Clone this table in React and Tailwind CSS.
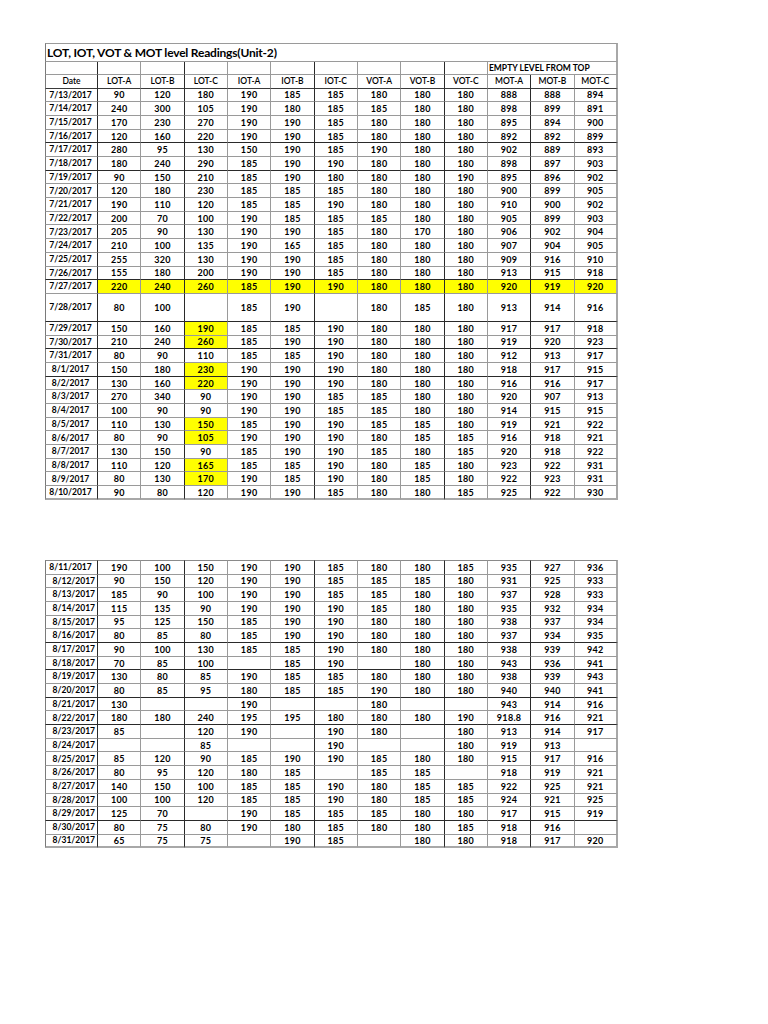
import React from "react";

const HEAD = ["Date","LOT-A","LOT-B","LOT-C","IOT-A","IOT-B","IOT-C","VOT-A","VOT-B","VOT-C","MOT-A","MOT-B","MOT-C"];

const T1 = [
  ["7/13/2017","90","120","180","190","185","185","180","180","180","888","888","894"],
  ["7/14/2017","240","300","105","190","180","185","185","180","180","898","899","891"],
  ["7/15/2017","170","230","270","190","190","185","180","180","180","895","894","900"],
  ["7/16/2017","120","160","220","190","190","185","180","180","180","892","892","899"],
  ["7/17/2017","280","95","130","150","190","185","190","180","180","902","889","893"],
  ["7/18/2017","180","240","290","185","190","190","180","180","180","898","897","903"],
  ["7/19/2017","90","150","210","185","190","180","180","180","190","895","896","902"],
  ["7/20/2017","120","180","230","185","185","185","180","180","180","900","899","905"],
  ["7/21/2017","190","110","120","185","185","190","180","180","180","910","900","902"],
  ["7/22/2017","200","70","100","190","185","185","185","180","180","905","899","903"],
  ["7/23/2017","205","90","130","190","190","185","180","170","180","906","902","904"],
  ["7/24/2017","210","100","135","190","165","185","180","180","180","907","904","905"],
  ["7/25/2017","255","320","130","190","190","185","180","180","180","909","916","910"],
  ["7/26/2017","155","180","200","190","190","185","180","180","180","913","915","918"],
  ["7/27/2017","220*","240*","260*","185*","190*","190*","180*","180*","180*","920*","919*","920*"],
  ["7/28/2017","80","100","","185","190","","180","185","180","913","914","916"],
  ["7/29/2017","150","160","190*","185","185","190","180","180","180","917","917","918"],
  ["7/30/2017","210","240","260*","185","190","190","180","180","180","919","920","923"],
  ["7/31/2017","80","90","110","185","185","190","180","180","180","912","913","917"],
  ["8/1/2017","150","180","230*","190","190","190","180","180","180","918","917","915"],
  ["8/2/2017","130","160","220*","190","190","190","180","180","180","916","916","917"],
  ["8/3/2017","270","340","90","190","190","185","185","180","180","920","907","913"],
  ["8/4/2017","100","90","90","190","190","185","185","180","180","914","915","915"],
  ["8/5/2017","110","130","150*","185","190","190","185","185","180","919","921","922"],
  ["8/6/2017","80","90","105*","190","190","190","180","185","185","916","918","921"],
  ["8/7/2017","130","150","90","185","190","190","185","180","185","920","918","922"],
  ["8/8/2017","110","120","165*","185","185","190","180","185","180","923","922","931"],
  ["8/9/2017","80","130","170*","190","185","190","180","185","180","922","923","931"],
  ["8/10/2017","90","80","120","190","190","185","180","180","185","925","922","930"],
];

const T2 = [
  ["8/11/2017","190","100","150","190","190","185","180","180","185","935","927","936"],
  ["8/12/2017","90","150","120","190","190","185","185","185","180","931","925","933"],
  ["8/13/2017","185","90","100","190","190","185","185","180","180","937","928","933"],
  ["8/14/2017","115","135","90","190","190","190","185","180","180","935","932","934"],
  ["8/15/2017","95","125","150","185","190","190","180","180","180","938","937","934"],
  ["8/16/2017","80","85","80","185","190","190","180","180","180","937","934","935"],
  ["8/17/2017","90","100","130","185","185","190","180","180","180","938","939","942"],
  ["8/18/2017","70","85","100","","185","190","","180","180","943","936","941"],
  ["8/19/2017","130","80","85","190","185","185","180","180","180","938","939","943"],
  ["8/20/2017","80","85","95","180","185","185","190","180","180","940","940","941"],
  ["8/21/2017","130","","","190","","","180","","","943","914","916"],
  ["8/22/2017","180","180","240","195","195","180","180","180","190","918.8","916","921"],
  ["8/23/2017","85","","120","190","","190","180","","180","913","914","917"],
  ["8/24/2017","","","85","","","190","","","180","919","913",""],
  ["8/25/2017","85","120","90","185","190","190","185","180","180","915","917","916"],
  ["8/26/2017","80","95","120","180","185","","185","185","","918","919","921"],
  ["8/27/2017","140","150","100","185","185","190","180","185","185","922","925","921"],
  ["8/28/2017","100","100","120","185","185","190","180","185","185","924","921","925"],
  ["8/29/2017","125","70","","190","185","185","185","180","180","917","915","919"],
  ["8/30/2017","80","75","80","190","180","185","180","180","185","918","916",""],
  ["8/31/2017","65","75","75","","190","185","","180","180","918","917","920"],
];

const DARK_COLS = new Set([0, 2, 5, 8, 10]);

function rightBorder(ci) {
  if (ci === 12) return "border-r-2 border-r-[#a8a8a8]";
  return DARK_COLS.has(ci) ? "border-r border-r-[#2a2a2a]" : "border-r border-r-[#9a9a9a]";
}

function Row({ row, dark, last, tall, dateAlign }) {
  const bottom = last
    ? "border-b-2 border-b-[#a8a8a8]"
    : dark
    ? "border-b border-b-[#2a2a2a]"
    : "border-b border-b-[#9a9a9a]";
  return (
    <tr className={tall ? "h-[28px]" : "h-[13.7px]"}>
      {row.map((v, ci) => {
        const yellow = v.endsWith("*");
        const text = yellow ? v.slice(0, -1) : v;
        const align = ci === 0 ? dateAlign : "text-center";
        return (
          <td
            key={ci}
            className={`p-0 align-middle leading-none ${align} ${bottom} ${rightBorder(ci)} ${ci === 0 ? "border-l border-l-[#7a7a7a] pr-[2px] text-[8.5px] tracking-[0px]" : "text-[9px] tracking-[0.3px]"} ${yellow ? "bg-[#ffff00]" : ""}`}
          >
            {text}
          </td>
        );
      })}
    </tr>
  );
}

function Colgroup() {
  return (
    <colgroup>
      <col className="w-[53px]" />
      {Array.from({ length: 12 }).map((_, i) => (
        <col key={i} />
      ))}
    </colgroup>
  );
}

export default function App() {
  const t1Dark = new Set([3, 5, 13, 15, 17, 19]);
  const t2Dark = new Set([5, 7, 9, 11, 18]);
  return (
    <div
      className="w-[768px] h-[1024px] bg-white pt-[43px] pl-[45px] text-black"
      style={{ fontFamily: "Lato, 'Liberation Sans', sans-serif" }}
    >
      <table className="w-[573px] table-fixed border-separate border-spacing-0 text-[8.5px] font-bold">
        <Colgroup />
        <tbody>
          <tr className="h-[19px]">
            <td
              colSpan={13}
              className="p-0 pl-[1px] text-left align-middle text-[12px] font-bold leading-none tracking-[-0.2px] border-t border-t-[#9a9a9a] border-l border-l-[#7a7a7a] border-r-2 border-r-[#a8a8a8] border-b border-b-[#9a9a9a]"
            >
              LOT, IOT, VOT &amp; MOT level Readings(Unit-2)
            </td>
          </tr>
          <tr className="h-[13.3px]">
            {Array.from({ length: 10 }).map((_, ci) => (
              <td
                key={ci}
                className={`p-0 border-b border-b-[#9a9a9a] ${rightBorder(ci)} ${ci === 0 ? "border-l border-l-[#7a7a7a]" : ""}`}
              />
            ))}
            <td
              colSpan={3}
              className="p-0 pl-[1px] text-left align-middle leading-none text-[8.5px] whitespace-nowrap border-b border-b-[#9a9a9a] border-r-2 border-r-[#a8a8a8]"
            >
              EMPTY LEVEL FROM TOP
            </td>
          </tr>
          <tr className="h-[13.3px]">
            {HEAD.map((h, ci) => (
              <td
                key={ci}
                className={`p-0 text-center align-middle leading-none font-semibold border-b border-b-[#3a3a3a] ${rightBorder(ci)} ${ci === 0 ? "border-l border-l-[#7a7a7a]" : ""}`}
              >
                {h}
              </td>
            ))}
          </tr>
          {T1.map((r, i) => (
            <Row
              key={i}
              row={r}
              dark={t1Dark.has(i)}
              last={i === T1.length - 1}
              tall={r[0] === "7/28/2017"}
              dateAlign="text-center"
            />
          ))}
        </tbody>
      </table>

      <div className="h-[60px]" />

      <table className="w-[573px] table-fixed border-separate border-spacing-0 text-[8.5px] font-bold">
        <Colgroup />
        <tbody>
          <tr className="h-0">
            {Array.from({ length: 13 }).map((_, ci) => (
              <td
                key={ci}
                className={`p-0 h-0 border-t border-t-[#8a8a8a] ${ci === 0 ? "border-l border-l-[#7a7a7a]" : ""} ${rightBorder(ci)}`}
              />
            ))}
          </tr>
          {T2.map((r, i) => (
            <Row
              key={i}
              row={r}
              dark={t2Dark.has(i)}
              last={i === T2.length - 1}
              tall={false}
              dateAlign={i === 0 ? "text-center" : "text-right"}
            />
          ))}
        </tbody>
      </table>
    </div>
  );
}
